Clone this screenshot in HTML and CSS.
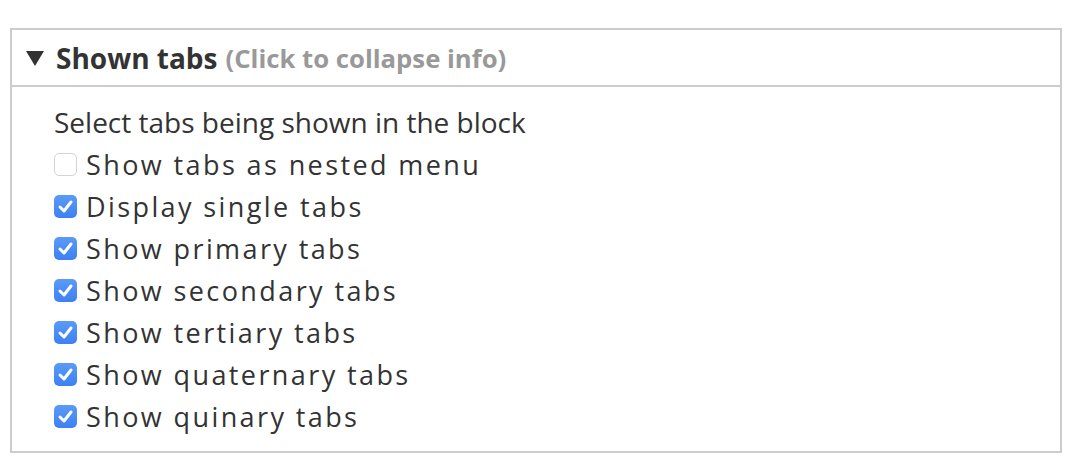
FILE: index.html
```html
<!DOCTYPE html>
<html>
<head>
<meta charset="utf-8">
<link rel="stylesheet" href="styles.css">
</head>
<body>
<div class="panel">
  <div class="panel-head">
    <svg class="caret" width="18" height="15" viewBox="0 0 18 15"><polygon points="0,0 18,0 9,15" fill="#333"/></svg>
    <span class="title">Shown tabs</span>
    <span class="hint">(Click to collapse info)</span>
  </div>
  <div class="panel-body">
    <div class="intro">Select tabs being shown in the block</div>
    <label class="opt"><span class="box"></span><span class="lbl">Show tabs as nested menu</span></label>
    <label class="opt"><span class="box on"><svg viewBox="0 0 23 23" width="23" height="23"><path d="M6 12 L10 16 L17 7" fill="none" stroke="#fff" stroke-width="3" stroke-linecap="round" stroke-linejoin="round"/></svg></span><span class="lbl">Display single tabs</span></label>
    <label class="opt"><span class="box on"><svg viewBox="0 0 23 23" width="23" height="23"><path d="M6 12 L10 16 L17 7" fill="none" stroke="#fff" stroke-width="3" stroke-linecap="round" stroke-linejoin="round"/></svg></span><span class="lbl">Show primary tabs</span></label>
    <label class="opt"><span class="box on"><svg viewBox="0 0 23 23" width="23" height="23"><path d="M6 12 L10 16 L17 7" fill="none" stroke="#fff" stroke-width="3" stroke-linecap="round" stroke-linejoin="round"/></svg></span><span class="lbl">Show secondary tabs</span></label>
    <label class="opt"><span class="box on"><svg viewBox="0 0 23 23" width="23" height="23"><path d="M6 12 L10 16 L17 7" fill="none" stroke="#fff" stroke-width="3" stroke-linecap="round" stroke-linejoin="round"/></svg></span><span class="lbl">Show tertiary tabs</span></label>
    <label class="opt"><span class="box on"><svg viewBox="0 0 23 23" width="23" height="23"><path d="M6 12 L10 16 L17 7" fill="none" stroke="#fff" stroke-width="3" stroke-linecap="round" stroke-linejoin="round"/></svg></span><span class="lbl">Show quaternary tabs</span></label>
    <label class="opt"><span class="box on"><svg viewBox="0 0 23 23" width="23" height="23"><path d="M6 12 L10 16 L17 7" fill="none" stroke="#fff" stroke-width="3" stroke-linecap="round" stroke-linejoin="round"/></svg></span><span class="lbl">Show quinary tabs</span></label>
  </div>
</div>
</body>
</html>
```

FILE: styles.css
```css
html, body {
  margin: 0;
  padding: 0;
  background: #fff;
}
body {
  font-family: "Open Sans", "DejaVu Sans", sans-serif;
  color: #333;
}
.panel {
  margin: 28px 12px 0 10px;
  border: 2px solid #ccc;
}
.panel-head {
  height: 55px;
  display: flex;
  align-items: center;
  padding-left: 14px;
  border-bottom: 2px solid #ccc;
  font-size: 28px;
  font-weight: 700;
}
.caret {
  margin-right: 12px;
  margin-top: 1px;
}
.title {
  color: #333;
}
.hint {
  color: #999;
  font-size: 25.7px;
  margin-left: 8px;
  margin-top: 2px;
}
.panel-body {
  padding: 14px 0 14px 42px;
}
.intro {
  height: 42px;
  line-height: 42px;
  font-size: 28px;
}
.opt {
  height: 42px;
  display: flex;
  align-items: center;
  font-size: 27px;
  letter-spacing: 2.4px;
}
.box {
  width: 23px;
  height: 23px;
  box-sizing: border-box;
  border-radius: 5px;
  border: 1px solid #d4d4d4;
  background: #fff;
  margin-right: 9px;
  display: flex;
  align-items: center;
  justify-content: center;
}
.box.on {
  border: none;
  background: linear-gradient(#5a9bf8, #3d80f2);
}
.box svg {
  display: block;
}
```
